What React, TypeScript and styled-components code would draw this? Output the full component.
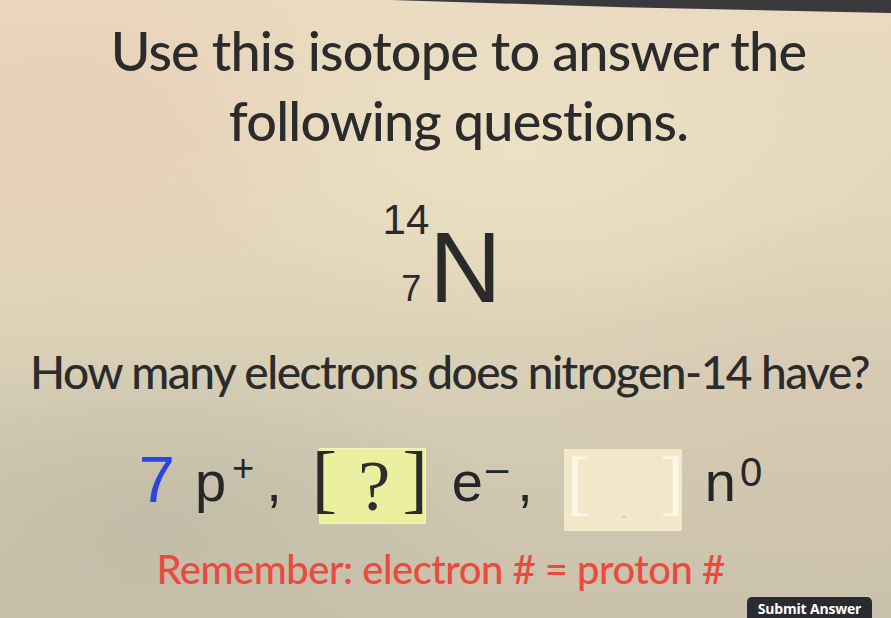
import styled, { createGlobalStyle } from 'styled-components';

const GlobalStyle = createGlobalStyle`
    html, body {
        margin: 0;
        padding: 0;
        width: 891px;
        height: 618px;
        overflow: hidden;
    }
`

export default function App() {
    return (
        <>
            <GlobalStyle />
            <Page>
                <Bezel />
                <Heading>
                    Use this isotope to answer the<br />
                    following questions.
                </Heading>
                <Nuclide>
                    <Numbers>
                        <MassNumber>14</MassNumber>
                        <AtomicNumber>7</AtomicNumber>
                    </Numbers>
                    <Symbol>N</Symbol>
                </Nuclide>
                <Question>How many electrons does nitrogen-14 have?</Question>
                <AnswerRow>
                    <Term><Blue>7</Blue></Term>
                    <Term $ml={20}>p<Sup $size={38} $raise={20} $gap={6}>+</Sup></Term>
                    <Term $ml={12}>,</Term>
                    <HighlightBox $ml={37}>
                        <Bracket>[</Bracket>
                        <Mark>?</Mark>
                        <Bracket>]</Bracket>
                    </HighlightBox>
                    <Term $ml={26}>e<Sup $size={40} $raise={19}>–</Sup></Term>
                    <Term $ml={9}>,</Term>
                    <InputBox $ml={31}>
                        <Bracket $faint>[</Bracket>
                        <Caret />
                        <Bracket $faint>]</Bracket>
                    </InputBox>
                    <Term $ml={23}>n<Sup $size={40} $raise={15} $gap={4}>0</Sup></Term>
                </AnswerRow>
                <Hint>Remember: electron # = proton #</Hint>
                <Footer>
                    <SubmitButton>Submit Answer</SubmitButton>
                </Footer>
            </Page>
        </>
    )
}

const Page = styled.main`
    position: relative;
    width: 891px;
    height: 618px;
    overflow: hidden;
    display: flex;
    flex-direction: column;
    align-items: center;
    background:
        radial-gradient(ellipse 420px 300px at 60px 120px, rgba(236, 200, 180, 0.55), transparent 70%),
        radial-gradient(ellipse 520px 260px at 520px 150px, rgba(242, 230, 202, 0.6), transparent 70%),
        radial-gradient(ellipse 500px 260px at 150px 520px, rgba(180, 178, 160, 0.45), transparent 70%),
        radial-gradient(ellipse 420px 300px at 840px 420px, rgba(214, 196, 176, 0.6), transparent 70%),
        linear-gradient(180deg, #e9dac0 0%, #e0d5ba 45%, #d1c9b1 75%, #c9c1ab 100%);
    font-family: Lato, "Open Sans", sans-serif;
    color: #2c2b2c;

    & > * {
        flex-shrink: 0;
    }
`

const Bezel = styled.div`
    position: absolute;
    top: 0;
    left: 0;
    width: 100%;
    height: 13px;
    background: #3a393b;
    clip-path: polygon(44% 0, 100% 0, 100% 100%, 70% 55%);
`

const Heading = styled.h1`
    margin: 16px 0 0;
    padding-left: 26px;
    font-size: 54px;
    font-weight: 500;
    line-height: 70px;
    letter-spacing: -0.8px;
    text-align: center;
`

const Nuclide = styled.div`
    margin-top: 43px;
    padding-right: 7px;
    display: flex;
    align-items: flex-end;
    font-family: "Liberation Sans", Arial, sans-serif;
    color: #2a2a2b;
`

const Numbers = styled.div`
    display: flex;
    flex-direction: column;
    align-items: flex-end;
    gap: 30px;
    margin-bottom: 10px;
`

const MassNumber = styled.span`
    font-size: 42px;
    line-height: 42px;
`

const AtomicNumber = styled.span`
    font-size: 36px;
    line-height: 36px;
    padding-right: 8px;
`

const Symbol = styled.span`
    font-size: 100px;
    line-height: 100px;
`

const Question = styled.p`
    margin: 27px 0 0;
    padding-left: 8px;
    font-size: 46px;
    font-weight: 500;
    line-height: 1.2;
    letter-spacing: -1.5px;
    white-space: nowrap;
`

const AnswerRow = styled.div`
    margin-top: 42px;
    padding-left: 10px;
    height: 90px;
    display: flex;
    align-items: center;
    font-family: "Liberation Sans", Arial, sans-serif;
    font-size: 56px;
    color: #262627;
`

const Term = styled.span<{ $ml?: number }>`
    margin-left: ${p => p.$ml ?? 0}px;
    margin-bottom: 9px;
    line-height: 56px;
    white-space: nowrap;
`

const Blue = styled.span`
    font-size: 65px;
    color: #2b44e2;
`

const Sup = styled.span<{ $size: number; $raise: number; $gap?: number }>`
    margin-left: ${p => p.$gap ?? 3}px;
    font-size: ${p => p.$size}px;
    line-height: 0;
    vertical-align: ${p => p.$raise}px;
`

const HighlightBox = styled.span<{ $ml?: number }>`
    margin-left: ${p => p.$ml ?? 0}px;
    width: 107px;
    height: 76px;
    box-sizing: border-box;
    display: flex;
    align-items: center;
    justify-content: space-between;
    background: #eaf0a0;
    box-shadow: inset 0 0 0 1px #f1f4bf;
`

const InputBox = styled.span<{ $ml?: number }>`
    margin-left: ${p => p.$ml ?? 0}px;
    width: 118px;
    height: 82px;
    box-sizing: border-box;
    padding: 0 0 0 10px;
    display: flex;
    align-items: center;
    justify-content: space-between;
    background: #f3e7ca;
    margin-bottom: -8px;
`

const Bracket = styled.span<{ $faint?: boolean }>`
    font-family: "Liberation Serif", "Times New Roman", serif;
    font-size: ${p => (p.$faint ? 72 : 76)}px;
    line-height: 76px;
    margin: 0 -3px 16px -7px;
    color: ${p => (p.$faint ? '#fbf6e9' : '#2a2a2a')};

    &:last-child {
        margin: 0 -2px 16px 0;
    }
`

const Mark = styled.span`
    font-family: "Liberation Serif", "Times New Roman", serif;
    font-size: 72px;
    line-height: 72px;
    color: #2e2e2c;
    margin-left: 12px;
`

const Caret = styled.span`
    width: 4px;
    height: 2px;
    margin-top: 54px;
    background: #e0cf8e;
`

const Hint = styled.p`
    margin: 14px 0 0;
    padding-right: 10px;
    font-size: 40px;
    font-weight: 500;
    line-height: 1.2;
    letter-spacing: -0.5px;
    color: #ea4b3e;
    white-space: nowrap;
`

const Footer = styled.div`
    align-self: stretch;
    margin-top: 4px;
    padding-right: 19px;
    display: flex;
    justify-content: flex-end;
`

const SubmitButton = styled.button`
    width: 125px;
    height: 30px;
    border: none;
    border-radius: 5px;
    padding: 4px 0 0;
    display: flex;
    justify-content: center;
    align-items: flex-start;
    background: #2a2b30;
    color: #ffffff;
    font-family: "Open Sans", Lato, sans-serif;
    font-size: 14px;
    line-height: 16px;
    font-weight: 700;
    letter-spacing: -0.2px;
`
